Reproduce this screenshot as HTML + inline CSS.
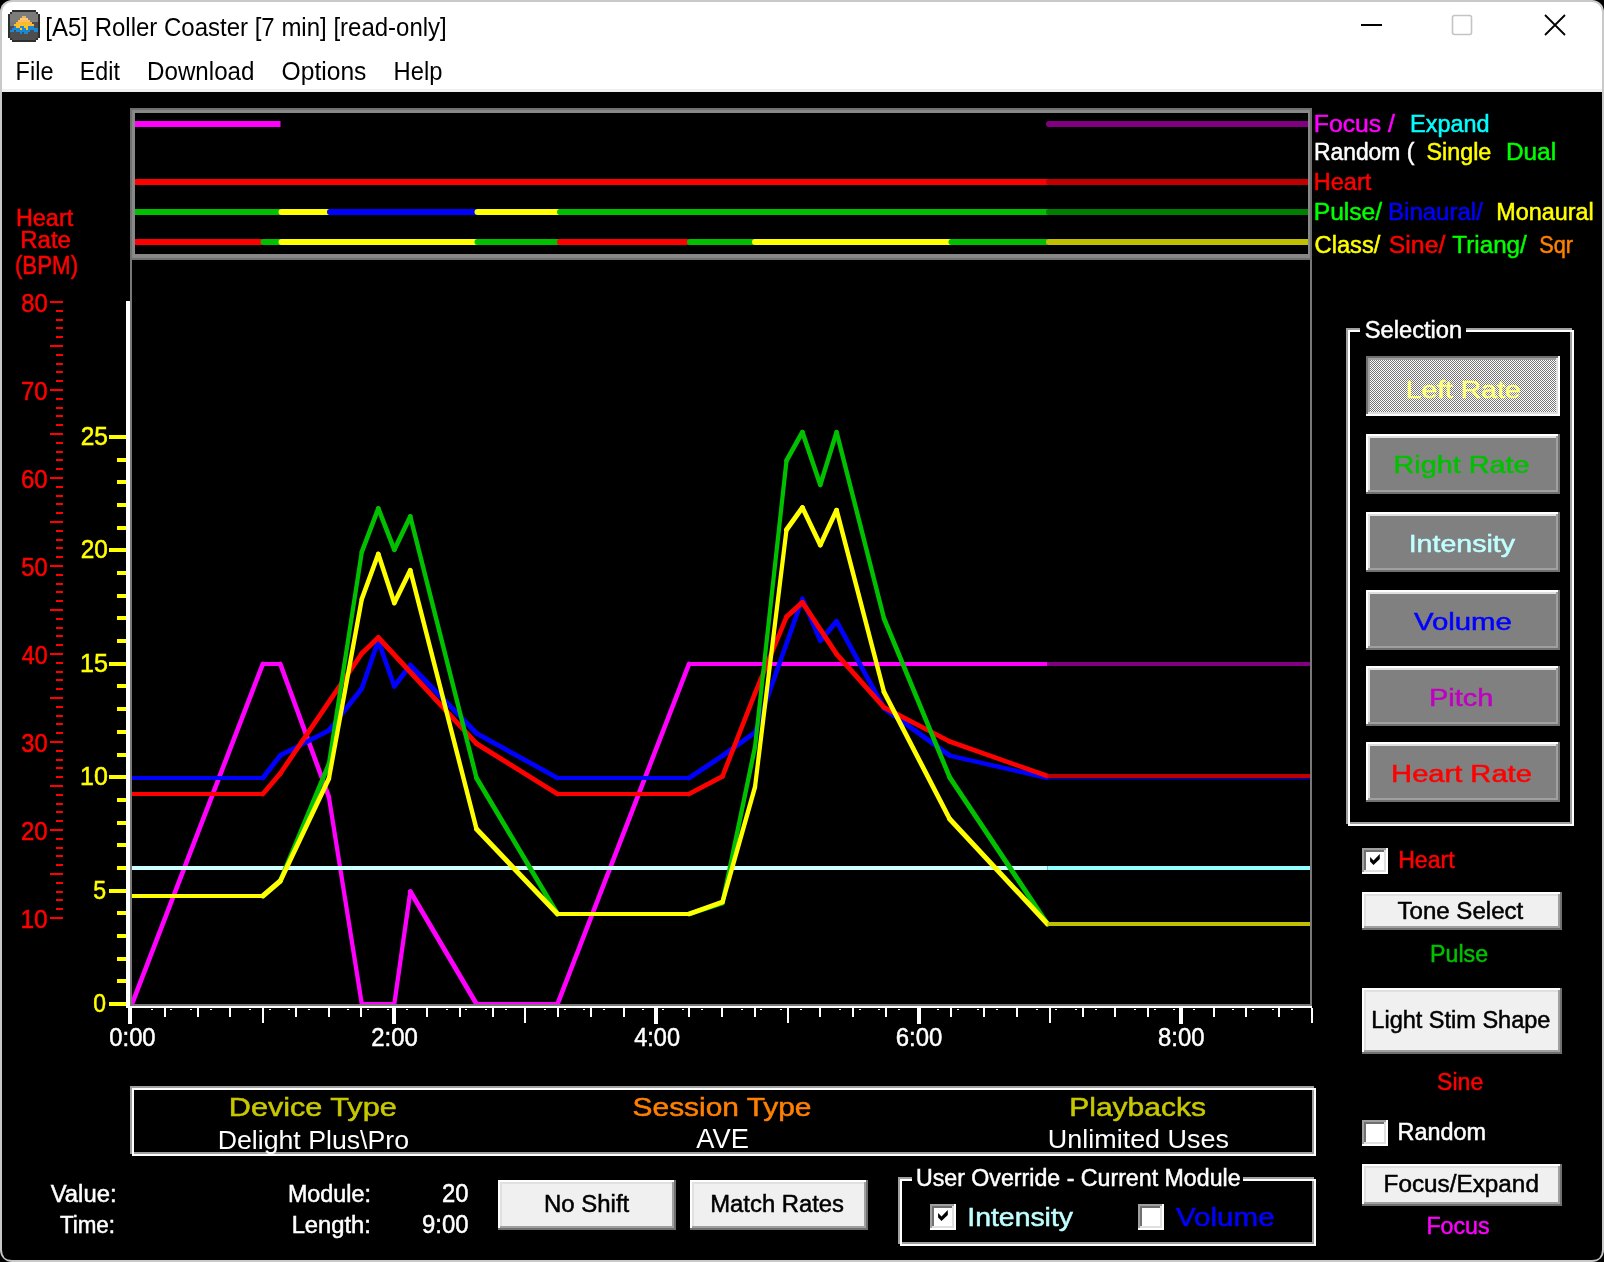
<!DOCTYPE html><html><head><meta charset="utf-8"><style>
html,body{margin:0;padding:0;background:#000;width:1604px;height:1262px;overflow:hidden}
svg{display:block;will-change:transform}
text{font-family:"Liberation Sans", sans-serif;white-space:pre}
</style></head><body>
<svg width="1604" height="1262" viewBox="0 0 1604 1262">
<rect x="0" y="0" width="1604" height="1262" rx="12" ry="12" fill="#c9c9c9"/>
<rect x="2" y="2" width="1600" height="1258" rx="10" ry="10" fill="#ffffff"/>
<path d="M2 92 H1602 V1250 Q1602 1260 1592 1260 H12 Q2 1260 2 1250 Z" fill="#000"/>
<rect x="2" y="89" width="1600" height="3" fill="#f0f0f0"/>
<g shape-rendering="crispEdges"><rect x="12" y="10" width="24" height="2" fill="#2e2e2e"/><rect x="10" y="12" width="28" height="2" fill="#2e2e2e"/><rect x="8" y="14" width="32" height="24" fill="#2e2e2e"/><rect x="10" y="38" width="28" height="2" fill="#2e2e2e"/><rect x="12" y="40" width="24" height="2" fill="#2e2e2e"/><rect x="12" y="12" width="24" height="2" fill="#7b7b7b"/><rect x="10" y="14" width="28" height="24" fill="#4d4d4d"/><rect x="12" y="38" width="24" height="2" fill="#4d4d4d"/><rect x="10" y="14" width="28" height="6" fill="#7b7b7b"/><rect x="10" y="20" width="22" height="2" fill="#7b7b7b"/><rect x="32" y="20" width="6" height="2" fill="#808080"/><rect x="10" y="22" width="20" height="4" fill="#767676"/><rect x="22" y="16" width="4" height="2" fill="#e8b868"/><rect x="20" y="18" width="8" height="2" fill="#ffc870"/><rect x="18" y="20" width="12" height="2" fill="#ffc060"/><rect x="16" y="22" width="16" height="2" fill="#fbb830"/><rect x="14" y="24" width="20" height="2" fill="#fbbc30"/><rect x="16" y="26" width="4" height="2" fill="#fcc420"/><rect x="24" y="26" width="4" height="2" fill="#fcc420"/><rect x="20" y="28" width="2" height="2" fill="#ffd000"/><rect x="26" y="28" width="2" height="2" fill="#ffd000"/><rect x="14" y="26" width="2" height="2" fill="#1a88d6"/><rect x="20" y="26" width="4" height="2" fill="#1a88d6"/><rect x="28" y="26" width="6" height="2" fill="#1a88d6"/><rect x="12" y="28" width="8" height="2" fill="#1a88d6"/><rect x="22" y="28" width="4" height="2" fill="#1a88d6"/><rect x="28" y="28" width="10" height="2" fill="#1a88d6"/><rect x="10" y="30" width="4" height="2" fill="#1a88d6"/><rect x="16" y="30" width="14" height="2" fill="#1a88d6"/><rect x="34" y="30" width="4" height="2" fill="#1a88d6"/><rect x="20" y="32" width="2" height="2" fill="#1a88d6"/><rect x="24" y="32" width="4" height="2" fill="#1a88d6"/></g>
<text x="45.32" y="36.3" font-size="25" fill="#000" textLength="401.46" lengthAdjust="spacingAndGlyphs">[A5] Roller Coaster [7 min] [read-only]</text>
<rect x="1361" y="24" width="21" height="2" fill="#000"/>
<rect x="1452.5" y="15.5" width="19" height="19" rx="2" fill="none" stroke="#c4c4c4" stroke-width="1.6"/>
<path d="M1545 15 L1565 35 M1565 15 L1545 35" stroke="#000" stroke-width="1.8"/>
<text x="15.62" y="80" font-size="25" fill="#000" textLength="37.87" lengthAdjust="spacingAndGlyphs">File</text>
<text x="79.84" y="80" font-size="25" fill="#000" textLength="40.05" lengthAdjust="spacingAndGlyphs">Edit</text>
<text x="147.07" y="80" font-size="25" fill="#000" textLength="107.36" lengthAdjust="spacingAndGlyphs">Download</text>
<text x="281.59" y="80" font-size="25" fill="#000" textLength="84.8" lengthAdjust="spacingAndGlyphs">Options</text>
<text x="393.6" y="80" font-size="25" fill="#000" textLength="48.79" lengthAdjust="spacingAndGlyphs">Help</text>
<g shape-rendering="crispEdges">
<rect x="130" y="108" width="2" height="898" fill="#787878"/>
<rect x="1310" y="108" width="2" height="898" fill="#787878"/>
<rect x="130" y="1004" width="1182" height="2" fill="#787878"/>
<rect x="130" y="108" width="1182" height="152" fill="#707070"/>
<rect x="132" y="110" width="1178" height="148" fill="#888888"/>
<rect x="135" y="113" width="1173" height="141" fill="#000"/>
</g>
<g>
<rect x="135" y="121" width="145.5" height="6" fill="#ff00ff"/>
<circle cx="1049" cy="124" r="3" fill="#800080"/><rect x="1049" y="121" width="259" height="6" fill="#800080"/>
<rect x="135" y="179" width="913.5" height="6" fill="#ff0000"/>
<rect x="1048.5" y="179" width="259.5" height="6" fill="#c00000"/>
<circle cx="1049.0" cy="182" r="3" fill="#c00000"/>
<rect x="135" y="209" width="146" height="6" fill="#00c000"/>
<rect x="281" y="209" width="48.5" height="6" fill="#ffff00"/>
<circle cx="281.5" cy="212" r="3" fill="#ffff00"/>
<rect x="329.5" y="209" width="147.5" height="6" fill="#0000ff"/>
<circle cx="330.0" cy="212" r="3" fill="#0000ff"/>
<rect x="477" y="209" width="82.5" height="6" fill="#ffff00"/>
<circle cx="477.5" cy="212" r="3" fill="#ffff00"/>
<rect x="559.5" y="209" width="489.0" height="6" fill="#00c000"/>
<circle cx="560.0" cy="212" r="3" fill="#00c000"/>
<rect x="1048.5" y="209" width="259.5" height="6" fill="#008000"/>
<circle cx="1049.0" cy="212" r="3" fill="#008000"/>
<rect x="135" y="239" width="128" height="6" fill="#ff0000"/>
<rect x="263" y="239" width="18" height="6" fill="#00c000"/>
<circle cx="263.5" cy="242" r="3" fill="#00c000"/>
<rect x="281" y="239" width="196" height="6" fill="#ffff00"/>
<circle cx="281.5" cy="242" r="3" fill="#ffff00"/>
<rect x="477" y="239" width="82.5" height="6" fill="#00c000"/>
<circle cx="477.5" cy="242" r="3" fill="#00c000"/>
<rect x="559.5" y="239" width="130.0" height="6" fill="#ff0000"/>
<circle cx="560.0" cy="242" r="3" fill="#ff0000"/>
<rect x="689.5" y="239" width="65.0" height="6" fill="#00c000"/>
<circle cx="690.0" cy="242" r="3" fill="#00c000"/>
<rect x="754.5" y="239" width="196.5" height="6" fill="#ffff00"/>
<circle cx="755.0" cy="242" r="3" fill="#ffff00"/>
<rect x="951" y="239" width="97.5" height="6" fill="#00c000"/>
<circle cx="951.5" cy="242" r="3" fill="#00c000"/>
<rect x="1048.5" y="239" width="259.5" height="6" fill="#c0c000"/>
<circle cx="1049.0" cy="242" r="3" fill="#c0c000"/>
</g>
<text x="1313.77" y="131.6" font-size="23.5" fill="#ff00ff" textLength="81.15" lengthAdjust="spacingAndGlyphs" stroke="#ff00ff" stroke-width="0.5">Focus /</text>
<text x="1410.08" y="131.6" font-size="23.5" fill="#00ffff" textLength="79.44" lengthAdjust="spacingAndGlyphs" stroke="#00ffff" stroke-width="0.5">Expand</text>
<text x="1313.92" y="159.6" font-size="23.5" fill="#ffffff" textLength="100.46" lengthAdjust="spacingAndGlyphs" stroke="#ffffff" stroke-width="0.5">Random (</text>
<text x="1426.5" y="159.6" font-size="23.5" fill="#ffff00" textLength="64.8" lengthAdjust="spacingAndGlyphs" stroke="#ffff00" stroke-width="0.5">Single</text>
<text x="1505.9" y="159.6" font-size="23.5" fill="#00ff00" textLength="50.18" lengthAdjust="spacingAndGlyphs" stroke="#00ff00" stroke-width="0.5">Dual</text>
<text x="1313.87" y="189.7" font-size="23.5" fill="#ff0000" textLength="57.4" lengthAdjust="spacingAndGlyphs" stroke="#ff0000" stroke-width="0.5">Heart</text>
<text x="1313.78" y="219.6" font-size="23.5" fill="#00ff00" textLength="68.35" lengthAdjust="spacingAndGlyphs" stroke="#00ff00" stroke-width="0.5">Pulse/</text>
<text x="1388.03" y="219.6" font-size="23.5" fill="#0000ff" textLength="94.85" lengthAdjust="spacingAndGlyphs" stroke="#0000ff" stroke-width="0.5">Binaural/</text>
<text x="1496.28" y="219.6" font-size="23.5" fill="#ffff00" textLength="97.38" lengthAdjust="spacingAndGlyphs" stroke="#ffff00" stroke-width="0.5">Monaural</text>
<text x="1314.57" y="253.1" font-size="23.5" fill="#ffff00" textLength="65.74" lengthAdjust="spacingAndGlyphs" stroke="#ffff00" stroke-width="0.5">Class/</text>
<text x="1388.83" y="253.1" font-size="23.5" fill="#ff0000" textLength="56.5" lengthAdjust="spacingAndGlyphs" stroke="#ff0000" stroke-width="0.5">Sine/</text>
<text x="1452.37" y="253.1" font-size="23.5" fill="#00ff00" textLength="74.47" lengthAdjust="spacingAndGlyphs" stroke="#00ff00" stroke-width="0.5">Triang/</text>
<text x="1539.27" y="253.1" font-size="23.5" fill="#ff8000" textLength="33.83" lengthAdjust="spacingAndGlyphs" stroke="#ff8000" stroke-width="0.5">Sqr</text>
<text x="15.98" y="225.7" font-size="23.5" fill="#ff0000" textLength="57.2" lengthAdjust="spacingAndGlyphs" stroke="#ff0000" stroke-width="0.5">Heart</text>
<text x="20.34" y="248" font-size="23.5" fill="#ff0000" textLength="50.55" lengthAdjust="spacingAndGlyphs" stroke="#ff0000" stroke-width="0.5">Rate</text>
<text x="14.91" y="273.7" font-size="25" fill="#ff0000" textLength="63.25" lengthAdjust="spacingAndGlyphs" stroke="#ff0000" stroke-width="0.5">(BPM)</text>
<g shape-rendering="crispEdges" fill="#ff0000">
<rect x="50" y="917" width="13" height="2"/>
<rect x="56" y="908" width="7" height="2"/>
<rect x="56" y="899" width="7" height="2"/>
<rect x="56" y="891" width="7" height="2"/>
<rect x="56" y="882" width="7" height="2"/>
<rect x="50" y="873" width="13" height="2"/>
<rect x="56" y="864" width="7" height="2"/>
<rect x="56" y="855" width="7" height="2"/>
<rect x="56" y="847" width="7" height="2"/>
<rect x="56" y="838" width="7" height="2"/>
<rect x="50" y="829" width="13" height="2"/>
<rect x="56" y="820" width="7" height="2"/>
<rect x="56" y="811" width="7" height="2"/>
<rect x="56" y="803" width="7" height="2"/>
<rect x="56" y="794" width="7" height="2"/>
<rect x="50" y="785" width="13" height="2"/>
<rect x="56" y="776" width="7" height="2"/>
<rect x="56" y="767" width="7" height="2"/>
<rect x="56" y="759" width="7" height="2"/>
<rect x="56" y="750" width="7" height="2"/>
<rect x="50" y="741" width="13" height="2"/>
<rect x="56" y="732" width="7" height="2"/>
<rect x="56" y="723" width="7" height="2"/>
<rect x="56" y="715" width="7" height="2"/>
<rect x="56" y="706" width="7" height="2"/>
<rect x="50" y="697" width="13" height="2"/>
<rect x="56" y="688" width="7" height="2"/>
<rect x="56" y="679" width="7" height="2"/>
<rect x="56" y="671" width="7" height="2"/>
<rect x="56" y="662" width="7" height="2"/>
<rect x="50" y="653" width="13" height="2"/>
<rect x="56" y="644" width="7" height="2"/>
<rect x="56" y="635" width="7" height="2"/>
<rect x="56" y="627" width="7" height="2"/>
<rect x="56" y="618" width="7" height="2"/>
<rect x="50" y="609" width="13" height="2"/>
<rect x="56" y="600" width="7" height="2"/>
<rect x="56" y="591" width="7" height="2"/>
<rect x="56" y="583" width="7" height="2"/>
<rect x="56" y="574" width="7" height="2"/>
<rect x="50" y="565" width="13" height="2"/>
<rect x="56" y="556" width="7" height="2"/>
<rect x="56" y="547" width="7" height="2"/>
<rect x="56" y="539" width="7" height="2"/>
<rect x="56" y="530" width="7" height="2"/>
<rect x="50" y="521" width="13" height="2"/>
<rect x="56" y="512" width="7" height="2"/>
<rect x="56" y="503" width="7" height="2"/>
<rect x="56" y="495" width="7" height="2"/>
<rect x="56" y="486" width="7" height="2"/>
<rect x="50" y="477" width="13" height="2"/>
<rect x="56" y="468" width="7" height="2"/>
<rect x="56" y="459" width="7" height="2"/>
<rect x="56" y="451" width="7" height="2"/>
<rect x="56" y="442" width="7" height="2"/>
<rect x="50" y="433" width="13" height="2"/>
<rect x="56" y="424" width="7" height="2"/>
<rect x="56" y="415" width="7" height="2"/>
<rect x="56" y="407" width="7" height="2"/>
<rect x="56" y="398" width="7" height="2"/>
<rect x="50" y="389" width="13" height="2"/>
<rect x="56" y="380" width="7" height="2"/>
<rect x="56" y="371" width="7" height="2"/>
<rect x="56" y="363" width="7" height="2"/>
<rect x="56" y="354" width="7" height="2"/>
<rect x="50" y="345" width="13" height="2"/>
<rect x="56" y="336" width="7" height="2"/>
<rect x="56" y="327" width="7" height="2"/>
<rect x="56" y="319" width="7" height="2"/>
<rect x="56" y="310" width="7" height="2"/>
<rect x="50" y="301" width="13" height="2"/>
</g>
<text x="20.41" y="928" font-size="25" fill="#ff0000" textLength="27.25" lengthAdjust="spacingAndGlyphs" stroke="#ff0000" stroke-width="0.5">10</text>
<text x="21.05" y="840" font-size="25" fill="#ff0000" textLength="26.59" lengthAdjust="spacingAndGlyphs" stroke="#ff0000" stroke-width="0.5">20</text>
<text x="21.3" y="752" font-size="25" fill="#ff0000" textLength="26.33" lengthAdjust="spacingAndGlyphs" stroke="#ff0000" stroke-width="0.5">30</text>
<text x="21.79" y="664" font-size="25" fill="#ff0000" textLength="25.83" lengthAdjust="spacingAndGlyphs" stroke="#ff0000" stroke-width="0.5">40</text>
<text x="21.3" y="576" font-size="25" fill="#ff0000" textLength="26.33" lengthAdjust="spacingAndGlyphs" stroke="#ff0000" stroke-width="0.5">50</text>
<text x="21.05" y="488" font-size="25" fill="#ff0000" textLength="26.59" lengthAdjust="spacingAndGlyphs" stroke="#ff0000" stroke-width="0.5">60</text>
<text x="21.05" y="400" font-size="25" fill="#ff0000" textLength="26.59" lengthAdjust="spacingAndGlyphs" stroke="#ff0000" stroke-width="0.5">70</text>
<text x="21.18" y="312" font-size="25" fill="#ff0000" textLength="26.46" lengthAdjust="spacingAndGlyphs" stroke="#ff0000" stroke-width="0.5">80</text>
<g shape-rendering="crispEdges" fill="#ffff00">
<rect x="109" y="1002" width="17" height="4"/>
<rect x="117" y="979" width="9" height="4"/>
<rect x="117" y="957" width="9" height="4"/>
<rect x="117" y="934" width="9" height="4"/>
<rect x="117" y="911" width="9" height="4"/>
<rect x="109" y="889" width="17" height="4"/>
<rect x="117" y="866" width="9" height="4"/>
<rect x="117" y="843" width="9" height="4"/>
<rect x="117" y="821" width="9" height="4"/>
<rect x="117" y="798" width="9" height="4"/>
<rect x="109" y="775" width="17" height="4"/>
<rect x="117" y="753" width="9" height="4"/>
<rect x="117" y="730" width="9" height="4"/>
<rect x="117" y="707" width="9" height="4"/>
<rect x="117" y="684" width="9" height="4"/>
<rect x="109" y="662" width="17" height="4"/>
<rect x="117" y="639" width="9" height="4"/>
<rect x="117" y="616" width="9" height="4"/>
<rect x="117" y="594" width="9" height="4"/>
<rect x="117" y="571" width="9" height="4"/>
<rect x="109" y="548" width="17" height="4"/>
<rect x="117" y="526" width="9" height="4"/>
<rect x="117" y="503" width="9" height="4"/>
<rect x="117" y="480" width="9" height="4"/>
<rect x="117" y="458" width="9" height="4"/>
<rect x="109" y="435" width="17" height="4"/>
</g>
<text x="93.33" y="1012" font-size="25" fill="#ffff00" textLength="12.75" lengthAdjust="spacingAndGlyphs" stroke="#ffff00" stroke-width="0.5">0</text>
<text x="93.32" y="899" font-size="25" fill="#ffff00" textLength="12.88" lengthAdjust="spacingAndGlyphs" stroke="#ffff00" stroke-width="0.5">5</text>
<text x="80.08" y="785" font-size="25" fill="#ffff00" textLength="27.81" lengthAdjust="spacingAndGlyphs" stroke="#ffff00" stroke-width="0.5">10</text>
<text x="80.07" y="672" font-size="25" fill="#ffff00" textLength="27.95" lengthAdjust="spacingAndGlyphs" stroke="#ffff00" stroke-width="0.5">15</text>
<text x="80.73" y="558" font-size="25" fill="#ffff00" textLength="27.13" lengthAdjust="spacingAndGlyphs" stroke="#ffff00" stroke-width="0.5">20</text>
<text x="80.72" y="445" font-size="25" fill="#ffff00" textLength="27.26" lengthAdjust="spacingAndGlyphs" stroke="#ffff00" stroke-width="0.5">25</text>
<g shape-rendering="crispEdges" fill="#ffffff">
<rect x="126" y="301" width="4" height="707"/>
<rect x="126" y="1006" width="1186" height="2"/>
<rect x="128" y="1006" width="4" height="18"/>
<rect x="164" y="1008" width="2" height="9"/>
<rect x="197" y="1008" width="2" height="9"/>
<rect x="229" y="1008" width="2" height="9"/>
<rect x="262" y="1008" width="2" height="15"/>
<rect x="295" y="1008" width="2" height="9"/>
<rect x="328" y="1008" width="2" height="9"/>
<rect x="360" y="1008" width="2" height="9"/>
<rect x="392" y="1008" width="4" height="16"/>
<rect x="426" y="1008" width="2" height="9"/>
<rect x="459" y="1008" width="2" height="9"/>
<rect x="492" y="1008" width="2" height="9"/>
<rect x="524" y="1008" width="2" height="15"/>
<rect x="557" y="1008" width="2" height="9"/>
<rect x="590" y="1008" width="2" height="9"/>
<rect x="623" y="1008" width="2" height="9"/>
<rect x="654" y="1008" width="4" height="16"/>
<rect x="688" y="1008" width="2" height="9"/>
<rect x="721" y="1008" width="2" height="9"/>
<rect x="754" y="1008" width="2" height="9"/>
<rect x="787" y="1008" width="2" height="15"/>
<rect x="819" y="1008" width="2" height="9"/>
<rect x="852" y="1008" width="2" height="9"/>
<rect x="885" y="1008" width="2" height="9"/>
<rect x="917" y="1008" width="4" height="16"/>
<rect x="950" y="1008" width="2" height="9"/>
<rect x="983" y="1008" width="2" height="9"/>
<rect x="1016" y="1008" width="2" height="9"/>
<rect x="1049" y="1008" width="2" height="15"/>
<rect x="1082" y="1008" width="2" height="9"/>
<rect x="1114" y="1008" width="2" height="9"/>
<rect x="1147" y="1008" width="2" height="9"/>
<rect x="1179" y="1008" width="4" height="16"/>
<rect x="1213" y="1008" width="2" height="9"/>
<rect x="1245" y="1008" width="2" height="9"/>
<rect x="1278" y="1008" width="2" height="9"/>
<rect x="1311" y="1008" width="2" height="15"/>
<rect x="151" y="1009" width="2" height="1"/>
<rect x="170" y="1009" width="2" height="1"/>
<rect x="190" y="1009" width="2" height="1"/>
<rect x="210" y="1009" width="2" height="1"/>
<rect x="249" y="1009" width="2" height="1"/>
<rect x="269" y="1009" width="2" height="1"/>
<rect x="288" y="1009" width="2" height="1"/>
<rect x="308" y="1009" width="2" height="1"/>
<rect x="347" y="1009" width="2" height="1"/>
<rect x="367" y="1009" width="2" height="1"/>
<rect x="387" y="1009" width="2" height="1"/>
<rect x="406" y="1009" width="2" height="1"/>
<rect x="446" y="1009" width="2" height="1"/>
<rect x="465" y="1009" width="2" height="1"/>
<rect x="485" y="1009" width="2" height="1"/>
<rect x="505" y="1009" width="2" height="1"/>
<rect x="544" y="1009" width="2" height="1"/>
<rect x="564" y="1009" width="2" height="1"/>
<rect x="583" y="1009" width="2" height="1"/>
<rect x="603" y="1009" width="2" height="1"/>
<rect x="642" y="1009" width="2" height="1"/>
<rect x="662" y="1009" width="2" height="1"/>
<rect x="682" y="1009" width="2" height="1"/>
<rect x="701" y="1009" width="2" height="1"/>
<rect x="741" y="1009" width="2" height="1"/>
<rect x="760" y="1009" width="2" height="1"/>
<rect x="780" y="1009" width="2" height="1"/>
<rect x="800" y="1009" width="2" height="1"/>
<rect x="839" y="1009" width="2" height="1"/>
<rect x="859" y="1009" width="2" height="1"/>
<rect x="878" y="1009" width="2" height="1"/>
<rect x="898" y="1009" width="2" height="1"/>
<rect x="937" y="1009" width="2" height="1"/>
<rect x="957" y="1009" width="2" height="1"/>
<rect x="977" y="1009" width="2" height="1"/>
<rect x="996" y="1009" width="2" height="1"/>
<rect x="1036" y="1009" width="2" height="1"/>
<rect x="1055" y="1009" width="2" height="1"/>
<rect x="1075" y="1009" width="2" height="1"/>
<rect x="1095" y="1009" width="2" height="1"/>
<rect x="1134" y="1009" width="2" height="1"/>
<rect x="1154" y="1009" width="2" height="1"/>
<rect x="1173" y="1009" width="2" height="1"/>
<rect x="1193" y="1009" width="2" height="1"/>
<rect x="1232" y="1009" width="2" height="1"/>
<rect x="1252" y="1009" width="2" height="1"/>
<rect x="1272" y="1009" width="2" height="1"/>
<rect x="1291" y="1009" width="2" height="1"/>
</g>
<text x="109.3" y="1046" font-size="25" fill="#ffffff" textLength="46.32" lengthAdjust="spacingAndGlyphs" stroke="#ffffff" stroke-width="0.5">0:00</text>
<text x="371.28" y="1046" font-size="25" fill="#ffffff" textLength="46.57" lengthAdjust="spacingAndGlyphs" stroke="#ffffff" stroke-width="0.5">2:00</text>
<text x="634.22" y="1046" font-size="25" fill="#ffffff" textLength="45.83" lengthAdjust="spacingAndGlyphs" stroke="#ffffff" stroke-width="0.5">4:00</text>
<text x="895.72" y="1046" font-size="25" fill="#ffffff" textLength="46.57" lengthAdjust="spacingAndGlyphs" stroke="#ffffff" stroke-width="0.5">6:00</text>
<text x="1158.07" y="1046" font-size="25" fill="#ffffff" textLength="46.44" lengthAdjust="spacingAndGlyphs" stroke="#ffffff" stroke-width="0.5">8:00</text>
<defs><clipPath id="plot"><rect x="132" y="113" width="1178" height="891"/></clipPath></defs>
<g clip-path="url(#plot)">
<g stroke="#ff00ff"><line x1="132.0" y1="1004" x2="262.8" y2="664" stroke-width="4.64" stroke-linecap="round"/><line x1="262.8" y1="664" x2="280.3" y2="664" stroke-width="4"/><line x1="280.3" y1="664" x2="328.9" y2="797" stroke-width="4.61" stroke-linecap="round"/><line x1="328.9" y1="797" x2="361.8" y2="1004" stroke-width="4.29" stroke-linecap="round"/><line x1="361.8" y1="1004" x2="394.3" y2="1004" stroke-width="4"/><line x1="394.3" y1="1004" x2="410.3" y2="891.6" stroke-width="4.27" stroke-linecap="round"/><line x1="410.3" y1="891.6" x2="476.5" y2="1004" stroke-width="4.83" stroke-linecap="round"/><line x1="476.5" y1="1004" x2="557.5" y2="1004" stroke-width="4"/><line x1="557.5" y1="1004" x2="689.0" y2="664" stroke-width="4.64" stroke-linecap="round"/><line x1="689.0" y1="664" x2="1047.5" y2="664" stroke-width="4"/></g>
<g stroke="#800080"><line x1="1047.5" y1="664" x2="1312.0" y2="664" stroke-width="4"/></g>
<g stroke="#0000ff"><line x1="132.0" y1="778" x2="262.8" y2="778" stroke-width="4"/><line x1="262.8" y1="778" x2="280.3" y2="755.4" stroke-width="4.92" stroke-linecap="round"/><line x1="280.3" y1="755.4" x2="328.9" y2="730.5" stroke-width="4.77" stroke-linecap="round"/><line x1="328.9" y1="730.5" x2="361.8" y2="688.5" stroke-width="4.92" stroke-linecap="round"/><line x1="361.8" y1="688.5" x2="378.3" y2="640.8" stroke-width="4.59" stroke-linecap="round"/><line x1="378.3" y1="640.8" x2="394.3" y2="686.3" stroke-width="4.59" stroke-linecap="round"/><line x1="394.3" y1="686.3" x2="410.3" y2="665.2" stroke-width="4.91" stroke-linecap="round"/><line x1="410.3" y1="665.2" x2="476.5" y2="733.3" stroke-width="4.95" stroke-linecap="round"/><line x1="476.5" y1="733.3" x2="557.5" y2="778" stroke-width="4.80" stroke-linecap="round"/><line x1="557.5" y1="778" x2="689.0" y2="778" stroke-width="4"/><line x1="689.0" y1="778" x2="722.5" y2="755.8" stroke-width="4.87" stroke-linecap="round"/><line x1="722.5" y1="755.8" x2="755.0" y2="732.5" stroke-width="4.90" stroke-linecap="round"/><line x1="755.0" y1="732.5" x2="802.4" y2="598.8" stroke-width="4.60" stroke-linecap="round"/><line x1="802.4" y1="598.8" x2="820.3" y2="640.6" stroke-width="4.69" stroke-linecap="round"/><line x1="820.3" y1="640.6" x2="836.6" y2="621.4" stroke-width="4.94" stroke-linecap="round"/><line x1="836.6" y1="621.4" x2="884.0" y2="708.2" stroke-width="4.80" stroke-linecap="round"/><line x1="884.0" y1="708.2" x2="949.7" y2="755.6" stroke-width="4.90" stroke-linecap="round"/><line x1="949.7" y1="755.6" x2="1047.5" y2="778" stroke-width="4.41" stroke-linecap="round"/></g>
<g stroke="#000080"><line x1="1047.5" y1="778" x2="1312.0" y2="778" stroke-width="4"/></g>
<g stroke="#ff0000"><line x1="132.0" y1="794" x2="262.8" y2="794" stroke-width="4"/><line x1="262.8" y1="794" x2="280.3" y2="773.5" stroke-width="4.94" stroke-linecap="round"/><line x1="280.3" y1="773.5" x2="361.8" y2="653.5" stroke-width="4.88" stroke-linecap="round"/><line x1="361.8" y1="653.5" x2="378.3" y2="637.5" stroke-width="4.95" stroke-linecap="round"/><line x1="378.3" y1="637.5" x2="476.5" y2="743.6" stroke-width="4.95" stroke-linecap="round"/><line x1="476.5" y1="743.6" x2="557.5" y2="794" stroke-width="4.85" stroke-linecap="round"/><line x1="557.5" y1="794" x2="689.0" y2="794" stroke-width="4"/><line x1="689.0" y1="794" x2="722.5" y2="776.3" stroke-width="4.78" stroke-linecap="round"/><line x1="722.5" y1="776.3" x2="755.0" y2="693.4" stroke-width="4.65" stroke-linecap="round"/><line x1="755.0" y1="693.4" x2="786.5" y2="616.8" stroke-width="4.67" stroke-linecap="round"/><line x1="786.5" y1="616.8" x2="802.4" y2="602.3" stroke-width="4.95" stroke-linecap="round"/><line x1="802.4" y1="602.3" x2="836.6" y2="654.2" stroke-width="4.87" stroke-linecap="round"/><line x1="836.6" y1="654.2" x2="884.0" y2="707.4" stroke-width="4.94" stroke-linecap="round"/><line x1="884.0" y1="707.4" x2="949.7" y2="741.5" stroke-width="4.78" stroke-linecap="round"/><line x1="949.7" y1="741.5" x2="1047.5" y2="776" stroke-width="4.60" stroke-linecap="round"/></g>
<g stroke="#c00000"><line x1="1047.5" y1="776" x2="1312.0" y2="776" stroke-width="4"/></g>
<rect x="132" y="866" width="915.5" height="4" fill="#ccffff"/>
<rect x="1047.5" y="866" width="262.5" height="4" fill="#90ffff"/>
<g stroke="#00c000"><line x1="132.0" y1="896" x2="262.8" y2="896" stroke-width="4"/><line x1="262.8" y1="896" x2="280.3" y2="881" stroke-width="4.94" stroke-linecap="round"/><line x1="280.3" y1="881" x2="328.9" y2="764" stroke-width="4.67" stroke-linecap="round"/><line x1="328.9" y1="764" x2="361.8" y2="552" stroke-width="4.29" stroke-linecap="round"/><line x1="361.8" y1="552" x2="378.3" y2="508.5" stroke-width="4.63" stroke-linecap="round"/><line x1="378.3" y1="508.5" x2="394.3" y2="549.7" stroke-width="4.64" stroke-linecap="round"/><line x1="394.3" y1="549.7" x2="410.3" y2="516.5" stroke-width="4.74" stroke-linecap="round"/><line x1="410.3" y1="516.5" x2="476.5" y2="778" stroke-width="4.45" stroke-linecap="round"/><line x1="476.5" y1="778" x2="557.5" y2="914" stroke-width="4.84" stroke-linecap="round"/><line x1="557.5" y1="914" x2="689.0" y2="914" stroke-width="4"/><line x1="689.0" y1="914" x2="722.5" y2="903" stroke-width="4.56" stroke-linecap="round"/><line x1="722.5" y1="903" x2="755.0" y2="747" stroke-width="4.38" stroke-linecap="round"/><line x1="755.0" y1="747" x2="786.5" y2="460.7" stroke-width="4.21" stroke-linecap="round"/><line x1="786.5" y1="460.7" x2="802.4" y2="432.2" stroke-width="4.81" stroke-linecap="round"/><line x1="802.4" y1="432.2" x2="820.3" y2="484.8" stroke-width="4.58" stroke-linecap="round"/><line x1="820.3" y1="484.8" x2="836.6" y2="432.2" stroke-width="4.54" stroke-linecap="round"/><line x1="836.6" y1="432.2" x2="884.0" y2="618.5" stroke-width="4.45" stroke-linecap="round"/><line x1="884.0" y1="618.5" x2="949.7" y2="777.3" stroke-width="4.67" stroke-linecap="round"/><line x1="949.7" y1="777.3" x2="1047.5" y2="924" stroke-width="4.88" stroke-linecap="round"/></g>
<g stroke="#ffff00"><line x1="132.0" y1="896" x2="262.8" y2="896" stroke-width="4"/><line x1="262.8" y1="896" x2="280.3" y2="881" stroke-width="4.94" stroke-linecap="round"/><line x1="280.3" y1="881" x2="328.9" y2="778.5" stroke-width="4.74" stroke-linecap="round"/><line x1="328.9" y1="778.5" x2="361.8" y2="599" stroke-width="4.34" stroke-linecap="round"/><line x1="361.8" y1="599" x2="378.3" y2="554" stroke-width="4.61" stroke-linecap="round"/><line x1="378.3" y1="554" x2="394.3" y2="603" stroke-width="4.56" stroke-linecap="round"/><line x1="394.3" y1="603" x2="410.3" y2="570.3" stroke-width="4.75" stroke-linecap="round"/><line x1="410.3" y1="570.3" x2="476.5" y2="829" stroke-width="4.46" stroke-linecap="round"/><line x1="476.5" y1="829" x2="557.5" y2="914" stroke-width="4.95" stroke-linecap="round"/><line x1="557.5" y1="914" x2="689.0" y2="914" stroke-width="4"/><line x1="689.0" y1="914" x2="722.5" y2="902" stroke-width="4.60" stroke-linecap="round"/><line x1="722.5" y1="902" x2="755.0" y2="787" stroke-width="4.50" stroke-linecap="round"/><line x1="755.0" y1="787" x2="786.5" y2="529.8" stroke-width="4.23" stroke-linecap="round"/><line x1="786.5" y1="529.8" x2="802.4" y2="507.6" stroke-width="4.90" stroke-linecap="round"/><line x1="802.4" y1="507.6" x2="820.3" y2="545" stroke-width="4.74" stroke-linecap="round"/><line x1="820.3" y1="545" x2="836.6" y2="510.1" stroke-width="4.73" stroke-linecap="round"/><line x1="836.6" y1="510.1" x2="884.0" y2="692" stroke-width="4.46" stroke-linecap="round"/><line x1="884.0" y1="692" x2="949.7" y2="819" stroke-width="4.78" stroke-linecap="round"/><line x1="949.7" y1="819" x2="1047.5" y2="924" stroke-width="4.95" stroke-linecap="round"/></g>
<g stroke="#c0c000"><line x1="1047.5" y1="924" x2="1312.0" y2="924" stroke-width="4"/></g>
</g>
<g shape-rendering="crispEdges">
<rect x="1346" y="328" width="14" height="2" fill="#a0a0a0"/>
<rect x="1466" y="328" width="106" height="2" fill="#a0a0a0"/>
<rect x="1346" y="328" width="2" height="496" fill="#a0a0a0"/>
<rect x="1570" y="328" width="2" height="498" fill="#a0a0a0"/>
<rect x="1346" y="822" width="226" height="2" fill="#a0a0a0"/>
<rect x="1348" y="330" width="12" height="2" fill="#ffffff"/>
<rect x="1466" y="330" width="108" height="2" fill="#ffffff"/>
<rect x="1348" y="330" width="2" height="496" fill="#ffffff"/>
<rect x="1572" y="330" width="2" height="496" fill="#ffffff"/>
<rect x="1348" y="824" width="226" height="2" fill="#ffffff"/>
<defs><pattern id="chk" width="2" height="2" patternUnits="userSpaceOnUse"><rect width="2" height="2" fill="#ffffff"/><rect width="1" height="1" fill="#767676"/><rect x="1" y="1" width="1" height="1" fill="#767676"/></pattern></defs>
<rect x="1366" y="356" width="194" height="60" fill="#ffffff"/>
<rect x="1366" y="356" width="192" height="58" fill="#707070"/>
<rect x="1368" y="358" width="190" height="56" fill="#e0e0e0"/>
<rect x="1368" y="358" width="188" height="54" fill="#a0a0a0"/>
<rect x="1370" y="360" width="186" height="52" fill="url(#chk)"/>
<rect x="1366" y="434" width="194" height="60" fill="#707070"/>
<rect x="1366" y="434" width="192" height="58" fill="#ffffff"/>
<rect x="1368" y="436" width="190" height="56" fill="#a0a0a0"/>
<rect x="1368" y="436" width="188" height="54" fill="#e0e0e0"/>
<rect x="1370" y="438" width="186" height="52" fill="#808080"/>
<rect x="1366" y="512" width="194" height="60" fill="#707070"/>
<rect x="1366" y="512" width="192" height="58" fill="#ffffff"/>
<rect x="1368" y="514" width="190" height="56" fill="#a0a0a0"/>
<rect x="1368" y="514" width="188" height="54" fill="#e0e0e0"/>
<rect x="1370" y="516" width="186" height="52" fill="#808080"/>
<rect x="1366" y="590" width="194" height="60" fill="#707070"/>
<rect x="1366" y="590" width="192" height="58" fill="#ffffff"/>
<rect x="1368" y="592" width="190" height="56" fill="#a0a0a0"/>
<rect x="1368" y="592" width="188" height="54" fill="#e0e0e0"/>
<rect x="1370" y="594" width="186" height="52" fill="#808080"/>
<rect x="1366" y="666" width="194" height="60" fill="#707070"/>
<rect x="1366" y="666" width="192" height="58" fill="#ffffff"/>
<rect x="1368" y="668" width="190" height="56" fill="#a0a0a0"/>
<rect x="1368" y="668" width="188" height="54" fill="#e0e0e0"/>
<rect x="1370" y="670" width="186" height="52" fill="#808080"/>
<rect x="1366" y="742" width="194" height="60" fill="#707070"/>
<rect x="1366" y="742" width="192" height="58" fill="#ffffff"/>
<rect x="1368" y="744" width="190" height="56" fill="#a0a0a0"/>
<rect x="1368" y="744" width="188" height="54" fill="#e0e0e0"/>
<rect x="1370" y="746" width="186" height="52" fill="#808080"/>
<rect x="1362" y="848" width="26" height="26" fill="#ffffff"/>
<rect x="1362" y="848" width="24" height="24" fill="#a0a0a0"/>
<rect x="1364" y="850" width="22" height="22" fill="#e0e0e0"/>
<rect x="1364" y="850" width="20" height="20" fill="#707070"/>
<rect x="1366" y="852" width="18" height="18" fill="#ffffff"/>
<polygon points="1370.1,857.1 1373.5,860.4 1379.8,854 1379.8,858.9 1373.5,864.9 1370.1,861.6" fill="#000" shape-rendering="geometricPrecision"/>
<rect x="1362" y="892" width="200" height="38" fill="#707070"/>
<rect x="1362" y="892" width="198" height="36" fill="#ffffff"/>
<rect x="1364" y="894" width="196" height="34" fill="#a0a0a0"/>
<rect x="1364" y="894" width="194" height="32" fill="#e0e0e0"/>
<rect x="1366" y="896" width="192" height="30" fill="#f0f0f0"/>
<rect x="1362" y="988" width="200" height="66" fill="#707070"/>
<rect x="1362" y="988" width="198" height="64" fill="#ffffff"/>
<rect x="1364" y="990" width="196" height="62" fill="#a0a0a0"/>
<rect x="1364" y="990" width="194" height="60" fill="#e0e0e0"/>
<rect x="1366" y="992" width="192" height="58" fill="#f0f0f0"/>
<rect x="1362" y="1120" width="26" height="26" fill="#ffffff"/>
<rect x="1362" y="1120" width="24" height="24" fill="#a0a0a0"/>
<rect x="1364" y="1122" width="22" height="22" fill="#e0e0e0"/>
<rect x="1364" y="1122" width="20" height="20" fill="#707070"/>
<rect x="1366" y="1124" width="18" height="18" fill="#ffffff"/>
<rect x="1362" y="1164" width="200" height="42" fill="#707070"/>
<rect x="1362" y="1164" width="198" height="40" fill="#ffffff"/>
<rect x="1364" y="1166" width="196" height="38" fill="#a0a0a0"/>
<rect x="1364" y="1166" width="194" height="36" fill="#e0e0e0"/>
<rect x="1366" y="1168" width="192" height="34" fill="#f0f0f0"/>
<rect x="130" y="1086" width="1184" height="2" fill="#a0a0a0"/>
<rect x="130" y="1086" width="2" height="68" fill="#a0a0a0"/>
<rect x="1312" y="1086" width="2" height="70" fill="#a0a0a0"/>
<rect x="130" y="1152" width="1184" height="2" fill="#a0a0a0"/>
<rect x="132" y="1088" width="1184" height="2" fill="#ffffff"/>
<rect x="132" y="1088" width="2" height="68" fill="#ffffff"/>
<rect x="1314" y="1088" width="2" height="68" fill="#ffffff"/>
<rect x="132" y="1154" width="1184" height="2" fill="#ffffff"/>
<rect x="498" y="1180" width="178" height="50" fill="#707070"/>
<rect x="498" y="1180" width="176" height="48" fill="#ffffff"/>
<rect x="500" y="1182" width="174" height="46" fill="#a0a0a0"/>
<rect x="500" y="1182" width="172" height="44" fill="#e0e0e0"/>
<rect x="502" y="1184" width="170" height="42" fill="#f0f0f0"/>
<rect x="690" y="1180" width="178" height="50" fill="#707070"/>
<rect x="690" y="1180" width="176" height="48" fill="#ffffff"/>
<rect x="692" y="1182" width="174" height="46" fill="#a0a0a0"/>
<rect x="692" y="1182" width="172" height="44" fill="#e0e0e0"/>
<rect x="694" y="1184" width="170" height="42" fill="#f0f0f0"/>
<rect x="898" y="1177" width="14" height="2" fill="#a0a0a0"/>
<rect x="1243" y="1177" width="71" height="2" fill="#a0a0a0"/>
<rect x="898" y="1177" width="2" height="67" fill="#a0a0a0"/>
<rect x="1312" y="1177" width="2" height="69" fill="#a0a0a0"/>
<rect x="898" y="1242" width="416" height="2" fill="#a0a0a0"/>
<rect x="900" y="1179" width="12" height="2" fill="#ffffff"/>
<rect x="1243" y="1179" width="73" height="2" fill="#ffffff"/>
<rect x="900" y="1179" width="2" height="67" fill="#ffffff"/>
<rect x="1314" y="1179" width="2" height="67" fill="#ffffff"/>
<rect x="900" y="1244" width="416" height="2" fill="#ffffff"/>
<rect x="930" y="1204" width="26" height="26" fill="#ffffff"/>
<rect x="930" y="1204" width="24" height="24" fill="#a0a0a0"/>
<rect x="932" y="1206" width="22" height="22" fill="#e0e0e0"/>
<rect x="932" y="1206" width="20" height="20" fill="#707070"/>
<rect x="934" y="1208" width="18" height="18" fill="#ffffff"/>
<polygon points="938.1,1213.1 941.5,1216.4 947.8,1210 947.8,1214.9 941.5,1220.9 938.1,1217.6" fill="#000" shape-rendering="geometricPrecision"/>
<rect x="1138" y="1204" width="26" height="26" fill="#ffffff"/>
<rect x="1138" y="1204" width="24" height="24" fill="#a0a0a0"/>
<rect x="1140" y="1206" width="22" height="22" fill="#e0e0e0"/>
<rect x="1140" y="1206" width="20" height="20" fill="#707070"/>
<rect x="1142" y="1208" width="18" height="18" fill="#ffffff"/>
</g>
<text x="1364.68" y="337.7" font-size="23.5" fill="#ffffff" textLength="97.58" lengthAdjust="spacingAndGlyphs" stroke="#ffffff" stroke-width="0.5">Selection</text>
<text x="1405.68" y="397.6" font-size="23.5" fill="#ffff80" textLength="115.14" lengthAdjust="spacingAndGlyphs" stroke="#ffff80" stroke-width="0.5">Left Rate</text>
<text x="1393.44" y="473.1" font-size="23.5" fill="#00c000" textLength="136.19" lengthAdjust="spacingAndGlyphs" stroke="#00c000" stroke-width="0.5">Right Rate</text>
<text x="1408.68" y="551.8" font-size="23.5" fill="#c0ffff" textLength="106.35" lengthAdjust="spacingAndGlyphs" stroke="#c0ffff" stroke-width="0.5">Intensity</text>
<text x="1414.0" y="629.9" font-size="23.5" fill="#0000ff" textLength="97.89" lengthAdjust="spacingAndGlyphs" stroke="#0000ff" stroke-width="0.5">Volume</text>
<text x="1428.94" y="705.8" font-size="23.5" fill="#c000c0" textLength="64.29" lengthAdjust="spacingAndGlyphs" stroke="#c000c0" stroke-width="0.5">Pitch</text>
<text x="1391.12" y="781.9" font-size="23.5" fill="#ff0000" textLength="140.75" lengthAdjust="spacingAndGlyphs" stroke="#ff0000" stroke-width="0.5">Heart Rate</text>
<text x="1398.2" y="868" font-size="23.5" fill="#ff0000" textLength="56.47" lengthAdjust="spacingAndGlyphs" stroke="#ff0000" stroke-width="0.5">Heart</text>
<text x="1397.47" y="918.6" font-size="23.5" fill="#000000" textLength="125.82" lengthAdjust="spacingAndGlyphs" stroke="#000000" stroke-width="0.5">Tone Select</text>
<text x="1430.09" y="961.9" font-size="23.5" fill="#00c000" textLength="58.04" lengthAdjust="spacingAndGlyphs" stroke="#00c000" stroke-width="0.5">Pulse</text>
<text x="1371.37" y="1027.8" font-size="23.5" fill="#000000" textLength="179.06" lengthAdjust="spacingAndGlyphs" stroke="#000000" stroke-width="0.5">Light Stim Shape</text>
<text x="1437.11" y="1089.6" font-size="23.5" fill="#ff0000" textLength="46.11" lengthAdjust="spacingAndGlyphs" stroke="#ff0000" stroke-width="0.5">Sine</text>
<text x="1397.58" y="1139.8" font-size="23.5" fill="#ffffff" textLength="88.49" lengthAdjust="spacingAndGlyphs" stroke="#ffffff" stroke-width="0.5">Random</text>
<text x="1383.61" y="1191.7" font-size="23.5" fill="#000000" textLength="155.29" lengthAdjust="spacingAndGlyphs" stroke="#000000" stroke-width="0.5">Focus/Expand</text>
<text x="1426.4" y="1233.6" font-size="23.5" fill="#ff00ff" textLength="63.12" lengthAdjust="spacingAndGlyphs" stroke="#ff00ff" stroke-width="0.5">Focus</text>
<text x="228.8" y="1116.1" font-size="25.5" fill="#c8c800" textLength="167.91" lengthAdjust="spacingAndGlyphs" stroke="#c8c800" stroke-width="0.5">Device Type</text>
<text x="217.66" y="1148.6" font-size="25.5" fill="#ffffff" textLength="191.41" lengthAdjust="spacingAndGlyphs">Delight Plus\Pro</text>
<text x="632.6" y="1115.9" font-size="25.5" fill="#ff8000" textLength="178.91" lengthAdjust="spacingAndGlyphs" stroke="#ff8000" stroke-width="0.5">Session Type</text>
<text x="696.3" y="1147.7" font-size="27" fill="#ffffff" textLength="52.54" lengthAdjust="spacingAndGlyphs">AVE</text>
<text x="1069.25" y="1116" font-size="25.5" fill="#c8c800" textLength="136.68" lengthAdjust="spacingAndGlyphs" stroke="#c8c800" stroke-width="0.5">Playbacks</text>
<text x="1047.88" y="1148" font-size="25.5" fill="#ffffff" textLength="181.04" lengthAdjust="spacingAndGlyphs">Unlimited Uses</text>
<text x="50.73" y="1201.5" font-size="23.5" fill="#ffffff" textLength="65.8" lengthAdjust="spacingAndGlyphs" stroke="#ffffff" stroke-width="0.5">Value:</text>
<text x="59.9" y="1233.1" font-size="23.5" fill="#ffffff" textLength="55.13" lengthAdjust="spacingAndGlyphs" stroke="#ffffff" stroke-width="0.5">Time:</text>
<text x="287.88" y="1201.5" font-size="23.5" fill="#ffffff" textLength="83.03" lengthAdjust="spacingAndGlyphs" stroke="#ffffff" stroke-width="0.5">Module:</text>
<text x="442.06" y="1201.5" font-size="25" fill="#ffffff" textLength="26.48" lengthAdjust="spacingAndGlyphs" stroke="#ffffff" stroke-width="0.5">20</text>
<text x="291.65" y="1233.1" font-size="23.5" fill="#ffffff" textLength="79.27" lengthAdjust="spacingAndGlyphs" stroke="#ffffff" stroke-width="0.5">Length:</text>
<text x="422.07" y="1233.1" font-size="25" fill="#ffffff" textLength="46.54" lengthAdjust="spacingAndGlyphs" stroke="#ffffff" stroke-width="0.5">9:00</text>
<text x="544.03" y="1212.3" font-size="23.5" fill="#000000" textLength="85.19" lengthAdjust="spacingAndGlyphs" stroke="#000000" stroke-width="0.5">No Shift</text>
<text x="710.24" y="1212.3" font-size="23.5" fill="#000000" textLength="133.8" lengthAdjust="spacingAndGlyphs" stroke="#000000" stroke-width="0.5">Match Rates</text>
<text x="915.91" y="1186" font-size="23.5" fill="#ffffff" textLength="324.68" lengthAdjust="spacingAndGlyphs" stroke="#ffffff" stroke-width="0.5">User Override - Current Module</text>
<text x="967.29" y="1225.8" font-size="25.5" fill="#c0ffff" textLength="105.73" lengthAdjust="spacingAndGlyphs" stroke="#c0ffff" stroke-width="0.5">Intensity</text>
<text x="1176.0" y="1226" font-size="25.5" fill="#0000ff" textLength="98.6" lengthAdjust="spacingAndGlyphs" stroke="#0000ff" stroke-width="0.5">Volume</text>
</svg></body></html>
